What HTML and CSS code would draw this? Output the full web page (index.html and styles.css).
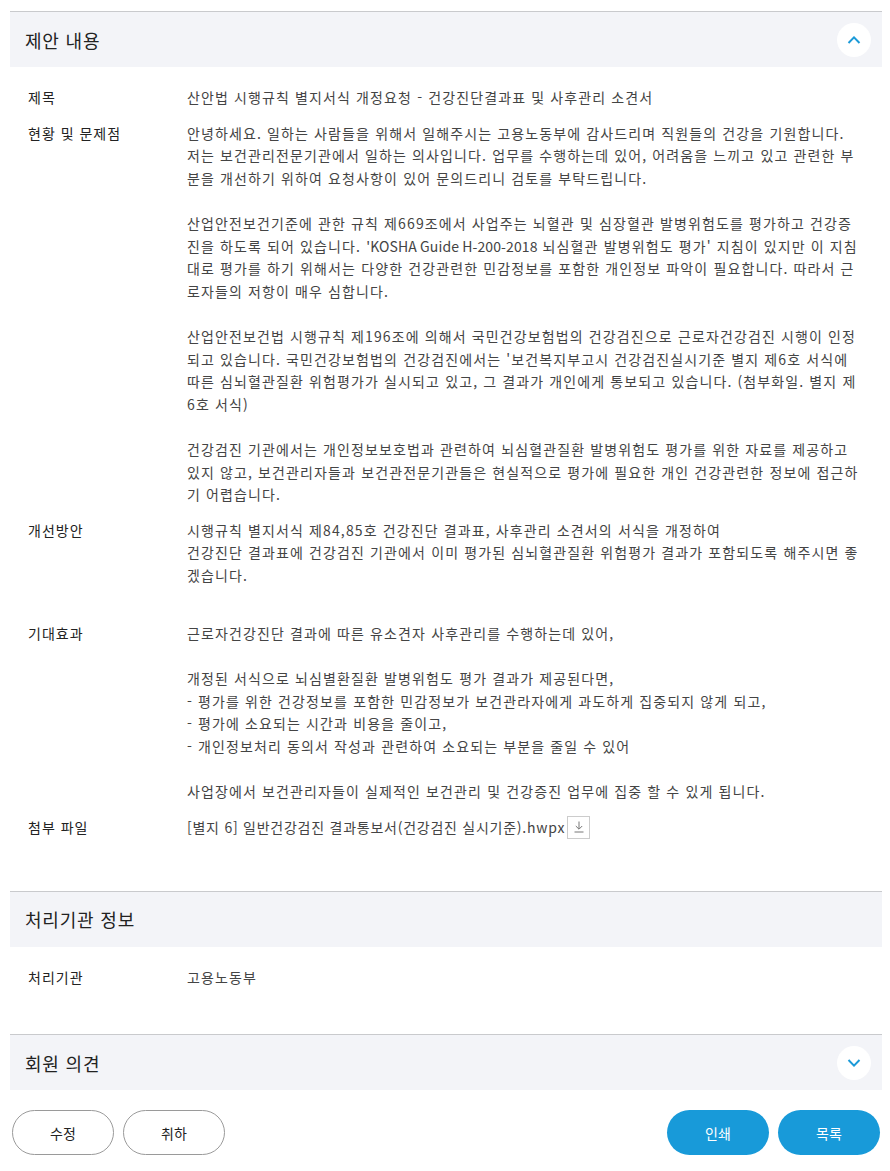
FILE: index.html
```html
<!DOCTYPE html>
<html lang="ko">
<head>
<meta charset="utf-8">
<title>제안 내용</title>
<link rel="stylesheet" href="styles.css">
</head>
<body>
<div class="wrap">
  <section class="panel">
    <div class="panel-head">
      <h2 class="panel-title">제안 내용</h2>
      <button class="toggle" type="button" aria-label="접기">
        <svg width="14" height="8" viewBox="0 0 14 8"><path d="M1.5 7 L7 1.4 L12.5 7" fill="none" stroke="#1b9ad8" stroke-width="2"/></svg>
      </button>
    </div>
    <div class="panel-body">
      <div class="row">
        <div class="label">제목</div>
        <div class="value">산안법 시행규칙 별지서식 개정요청 - 건강진단결과표 및 사후관리 소견서</div>
      </div>
      <div class="row">
        <div class="label">현황 및 문제점</div>
        <div class="value pre">안녕하세요. 일하는 사람들을 위해서 일해주시는 고용노동부에 감사드리며 직원들의 건강을 기원합니다.
저는 보건관리전문기관에서 일하는 의사입니다. 업무를 수행하는데 있어, 어려움을 느끼고 있고 관련한 부분을 개선하기 위하여 요청사항이 있어 문의드리니 검토를 부탁드립니다.

산업안전보건기준에 관한 규칙 제669조에서 사업주는 뇌혈관 및 심장혈관 발병위험도를 평가하고 건강증진을 하도록 되어 있습니다. <span class="en" lang="en">'KOSHA Guide H-200-2018</span> 뇌심혈관 발병위험도 평가' 지침이 있지만 이 지침대로 평가를 하기 위해서는 다양한 건강관련한 민감정보를 포함한 개인정보 파악이 필요합니다. 따라서 근로자들의 저항이 매우 심합니다.

산업안전보건법 시행규칙 제196조에 의해서 국민건강보험법의 건강검진으로 근로자건강검진 시행이 인정되고 있습니다. 국민건강보험법의 건강검진에서는 '보건복지부고시 건강검진실시기준 별지 제6호 서식에 따른 심뇌혈관질환 위험평가가 실시되고 있고, 그 결과가 개인에게 통보되고 있습니다. (첨부화일. 별지 제 6호 서식)

건강검진 기관에서는 개인정보보호법과 관련하여 뇌심혈관질환 발병위험도 평가를 위한 자료를 제공하고 있지 않고, 보건관리자들과 보건관전문기관들은 현실적으로 평가에 필요한 개인 건강관련한 정보에 접근하기 어렵습니다.</div>
      </div>
      <div class="row">
        <div class="label">개선방안</div>
        <div class="value pre">시행규칙 별지서식 제84,85호 건강진단 결과표, 사후관리 소견서의 서식을 개정하여
건강진단 결과표에 건강검진 기관에서 이미 평가된 심뇌혈관질환 위험평가 결과가 포함되도록 해주시면 좋겠습니다.
&nbsp;</div>
      </div>
      <div class="row">
        <div class="label">기대효과</div>
        <div class="value pre">근로자건강진단 결과에 따른 유소견자 사후관리를 수행하는데 있어,

개정된 서식으로 뇌심별환질환 발병위험도 평가 결과가 제공된다면,
- 평가를 위한 건강정보를 포함한 민감정보가 보건관라자에게 과도하게 집중되지 않게 되고,
- 평가에 소요되는 시간과 비용을 줄이고,
- 개인정보처리 동의서 작성과 관련하여 소요되는 부분을 줄일 수 있어

사업장에서 보건관리자들이 실제적인 보건관리 및 건강증진 업무에 집중 할 수 있게 됩니다.</div>
      </div>
      <div class="row row-file">
        <div class="label">첨부 파일</div>
        <div class="value file">
          <span>[별지 6] 일반건강검진 결과통보서(건강검진 실시기준).hwpx</span>
          <button class="download" type="button" aria-label="다운로드">
            <svg width="10" height="12" viewBox="0 0 10 12"><path d="M5 0.5 V8 M1.8 5 L5 8.2 L8.2 5 M0.5 11 H9.5" fill="none" stroke="#777" stroke-width="1"/></svg>
          </button>
        </div>
      </div>
    </div>
  </section>

  <section class="panel">
    <div class="panel-head">
      <h2 class="panel-title">처리기관 정보</h2>
    </div>
    <div class="panel-body">
      <div class="row">
        <div class="label">처리기관</div>
        <div class="value">고용노동부</div>
      </div>
    </div>
  </section>

  <section class="panel">
    <div class="panel-head">
      <h2 class="panel-title">회원 의견</h2>
      <button class="toggle" type="button" aria-label="펼치기">
        <svg width="14" height="8" viewBox="0 0 14 8"><path d="M1.5 1 L7 6.6 L12.5 1" fill="none" stroke="#1b9ad8" stroke-width="2"/></svg>
      </button>
    </div>
  </section>

  <div class="actions">
    <div class="group">
      <button class="btn outline" type="button">수정</button>
      <button class="btn outline" type="button">취하</button>
    </div>
    <div class="group">
      <button class="btn primary" type="button">인쇄</button>
      <button class="btn primary" type="button">목록</button>
    </div>
  </div>
</div>
</body>
</html>
```

FILE: styles.css
```css
* { box-sizing: border-box; }
html, body { margin: 0; padding: 0; background: #fff; }
body {
  font-family: "Noto Sans CJK KR", "Noto Sans", sans-serif;
  font-size: 14px;
  color: #222;
}
.wrap {
  margin: 0 8px 0 10px;
  padding-top: 11px;
}
.panel-head {
  height: 56px;
  border-top: 1px solid #c9cacd;
  background: #f3f4f8;
  display: flex;
  align-items: center;
  justify-content: space-between;
  padding: 0 10px 0 15px;
}
.panel-title {
  margin: 0;
  font-size: 18px;
  font-weight: 400;
  color: #222;
  letter-spacing: 0.8px;
}
.toggle {
  width: 34px;
  height: 34px;
  border-radius: 50%;
  border: 0;
  background: #fff;
  display: flex;
  align-items: center;
  justify-content: center;
  padding: 0;
  margin-right: 1px;
}
.panel-body {
  padding: 19px 0 46px 18px;
  display: flex;
  flex-direction: column;
  gap: 13px;
}
.row {
  display: grid;
  grid-template-columns: 159px 1fr;
  line-height: 22.6px;
}
.label { color: #222; letter-spacing: 1px; }
.value {
  color: #444;
  padding-right: 18px;
  letter-spacing: 1.12px;
}
.pre { white-space: pre-line; }
.en { letter-spacing: 0.1px; }
.row-file { padding-bottom: 6px; }
.file {
  display: flex;
  align-items: center;
  gap: 2px;
  letter-spacing: 0.75px;
}
.download {
  width: 23px;
  height: 23px;
  border: 1px solid #ccc;
  background: #fff;
  padding: 0;
  display: flex;
  align-items: center;
  justify-content: center;
}
.actions {
  display: flex;
  justify-content: space-between;
  margin-top: 20px;
  padding: 0 2px;
}
.group { display: flex; gap: 9px; }
.btn {
  width: 102px;
  height: 45px;
  border-radius: 23px;
  font-family: inherit;
  font-size: 14px;
}
.outline {
  background: #fff;
  border: 1px solid #9a9a9a;
  color: #222;
}
.primary {
  background: #189ad9;
  border: 0;
  color: #fff;
}
```
